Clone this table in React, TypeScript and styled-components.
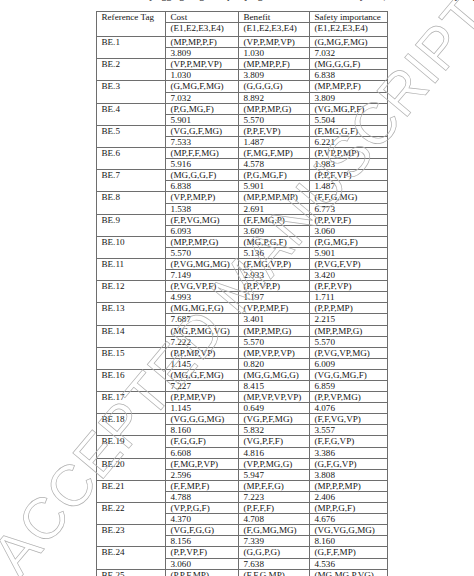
import styled, { createGlobalStyle } from 'styled-components'

const GlobalStyle = createGlobalStyle`
  html, body {
    margin: 0;
    padding: 0;
    background: #ffffff;
  }
`

type Entry = {
  tag: string
  cost: [string, string]
  benefit: [string, string]
  safety: [string, string]
}

const linhas: Entry[] = [
  { tag: 'BE.1', cost: ['(MP,MP,P,F)', '3.809'], benefit: ['(VP,P,MP,VP)', '1.030'], safety: ['(G,MG,F,MG)', '7.032'] },
  { tag: 'BE.2', cost: ['(VP,P,MP,VP)', '1.030'], benefit: ['(MP,MP,P,F)', '3.809'], safety: ['(MG,G,G,F)', '6.838'] },
  { tag: 'BE.3', cost: ['(G,MG,F,MG)', '7.032'], benefit: ['(G,G,G,G)', '8.892'], safety: ['(MP,MP,P,F)', '3.809'] },
  { tag: 'BE.4', cost: ['(P,G,MG,F)', '5.901'], benefit: ['(MP,P,MP,G)', '5.570'], safety: ['(VG,MG,P,F)', '5.504'] },
  { tag: 'BE.5', cost: ['(VG,G,F,MG)', '7.533'], benefit: ['(P,P,F,VP)', '1.487'], safety: ['(F,MG,G,F)', '6.221'] },
  { tag: 'BE.6', cost: ['(MP,F,F,MG)', '5.916'], benefit: ['(F,MG,F,MP)', '4.578'], safety: ['(P,VP,P,MP)', '1.983'] },
  { tag: 'BE.7', cost: ['(MG,G,G,F)', '6.838'], benefit: ['(P,G,MG,F)', '5.901'], safety: ['(P,P,F,VP)', '1.487'] },
  { tag: 'BE.8', cost: ['(VP,P,MP,P)', '1.538'], benefit: ['(MP,P,MP,MP)', '2.691'], safety: ['(F,F,G,MG)', '6.773'] },
  { tag: 'BE.9', cost: ['(F,P,VG,MG)', '6.093'], benefit: ['(F,F,MG,P)', '3.609'], safety: ['(P,P,VP,F)', '3.060'] },
  { tag: 'BE.10', cost: ['(MP,P,MP,G)', '5.570'], benefit: ['(MG,P,G,F)', '5.136'], safety: ['(P,G,MG,F)', '5.901'] },
  { tag: 'BE.11', cost: ['(P,VG,MG,MG)', '7.149'], benefit: ['(F,MG,VP,P)', '2.933'], safety: ['(P,VG,F,VP)', '3.420'] },
  { tag: 'BE.12', cost: ['(P,VG,VP,F)', '4.993'], benefit: ['(P,P,VP,P)', '1.197'], safety: ['(P,F,P,VP)', '1.711'] },
  { tag: 'BE.13', cost: ['(MG,MG,F,G)', '7.687'], benefit: ['(VP,P,MP,F)', '3.401'], safety: ['(P,P,P,MP)', '2.215'] },
  { tag: 'BE.14', cost: ['(MG,P,MG,VG)', '7.222'], benefit: ['(MP,P,MP,G)', '5.570'], safety: ['(MP,P,MP,G)', '5.570'] },
  { tag: 'BE.15', cost: ['(P,P,MP,VP)', '1.145'], benefit: ['(MP,VP,P,VP)', '0.820'], safety: ['(P,VG,VP,MG)', '6.009'] },
  { tag: 'BE.16', cost: ['(MG,G,F,MG)', '7.227'], benefit: ['(MG,G,MG,G)', '8.415'], safety: ['(VG,G,MG,F)', '6.859'] },
  { tag: 'BE.17', cost: ['(P,P,MP,VP)', '1.145'], benefit: ['(MP,VP,VP,VP)', '0.649'], safety: ['(P,P,VP,MG)', '4.076'] },
  { tag: 'BE.18', cost: ['(VG,G,G,MG)', '8.160'], benefit: ['(VG,P,F,MG)', '5.832'], safety: ['(F,F,VG,VP)', '3.557'] },
  { tag: 'BE.19', cost: ['(F,G,G,F)', '6.608'], benefit: ['(VG,P,F,F)', '4.816'], safety: ['(F,F,G,VP)', '3.386'] },
  { tag: 'BE.20', cost: ['(F,MG,P,VP)', '2.596'], benefit: ['(VP,P,MG,G)', '5.947'], safety: ['(G,F,G,VP)', '3.808'] },
  { tag: 'BE.21', cost: ['(F,F,MP,F)', '4.788'], benefit: ['(MP,F,F,G)', '7.223'], safety: ['(MP,P,P,MP)', '2.406'] },
  { tag: 'BE.22', cost: ['(VP,P,G,F)', '4.370'], benefit: ['(P,F,F,F)', '4.708'], safety: ['(MP,P,G,F)', '4.676'] },
  { tag: 'BE.23', cost: ['(VG,F,G,G)', '8.156'], benefit: ['(F,G,MG,MG)', '7.339'], safety: ['(VG,VG,G,MG)', '8.160'] },
  { tag: 'BE.24', cost: ['(P,P,VP,F)', '3.060'], benefit: ['(G,G,P,G)', '7.638'], safety: ['(G,F,F,MP)', '4.536'] },
  { tag: 'BE.25', cost: ['(P,P,F,MP)', ''], benefit: ['(F,F,G,MP)', ''], safety: ['(MG,MG,P,VG)', ''] },
]

const Pagina = styled.div`
  position: relative;
  width: 474px;
  height: 576px;
  overflow: hidden;
  font-family: 'Liberation Serif', 'Times New Roman', serif;
  color: #141414;
`

const Legenda = styled.p`
  margin: -10px 0 0 98px;
  font-size: 10px;
  line-height: 12px;
  white-space: nowrap;
`

const Tabela = styled.table`
  margin: 9px 0 0 96px;
  width: 291px;
  table-layout: fixed;
  border-collapse: collapse;
  font-size: 9.1px;
`

const Linha = styled.tr<{ $alta?: boolean }>`
  height: ${(p) => (p.$alta ? '14px' : '11.1px')};
`

const Celula = styled.td`
  border: 1px solid #6e6e6e;
  padding: 0 0 0 4.5px;
  line-height: 10px;
  vertical-align: top;
  white-space: nowrap;
  overflow: hidden;
`

const Marca = styled.div`
  position: absolute;
  left: 240px;
  top: 284px;
  transform: translate(-50%, -50%) rotate(-50deg);
  font-family: 'Liberation Sans', Arial, sans-serif;
  font-size: 58px;
  letter-spacing: 1px;
  white-space: nowrap;
  color: transparent;
  -webkit-text-stroke: 0.7px #b0b0b0;
  pointer-events: none;
`

const App = () => {
  return (
    <Pagina>
      <GlobalStyle />

      <Legenda>
        Table 3 Fuzzy aggregating of expert judgement for basic events by cost, benefit and safety importance
      </Legenda>

      <Tabela>
        <colgroup>
          <col style={{ width: 69 }} />
          <col style={{ width: 73 }} />
          <col style={{ width: 71 }} />
          <col style={{ width: 78 }} />
        </colgroup>
        <tbody>
          <Linha>
            <Celula rowSpan={2}>Reference Tag</Celula>
            <Celula>Cost</Celula>
            <Celula>Benefit</Celula>
            <Celula>Safety importance</Celula>
          </Linha>
          <Linha $alta>
            <Celula>(E1,E2,E3,E4)</Celula>
            <Celula>(E1,E2,E3,E4)</Celula>
            <Celula>(E1,E2,E3,E4)</Celula>
          </Linha>

          {linhas.map((l) => [
            <Linha key={l.tag + 'a'}>
              <Celula rowSpan={2}>{l.tag}</Celula>
              <Celula>{l.cost[0]}</Celula>
              <Celula>{l.benefit[0]}</Celula>
              <Celula>{l.safety[0]}</Celula>
            </Linha>,
            <Linha key={l.tag + 'b'}>
              <Celula>{l.cost[1]}</Celula>
              <Celula>{l.benefit[1]}</Celula>
              <Celula>{l.safety[1]}</Celula>
            </Linha>,
          ])}
        </tbody>
      </Tabela>

      <Marca>ACCEPTED MANUSCRIPT</Marca>
    </Pagina>
  )
}

export default App
